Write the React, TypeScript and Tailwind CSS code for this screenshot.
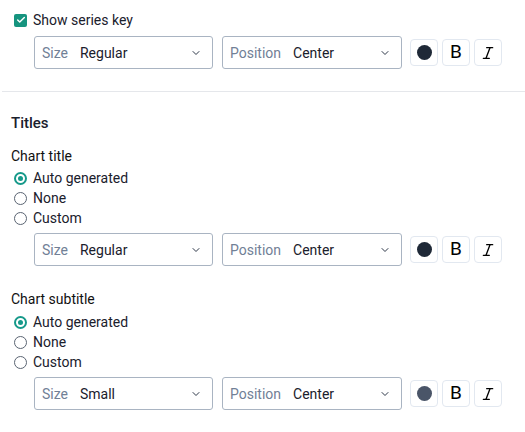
import { Italic, ChevronDown, Check } from "lucide-react";

type SelectProps = { label: string; value: string; width: string };

function Select({ label, value, width }: SelectProps) {
  return (
    <div
      className={`flex items-center h-[33px] ${width} rounded-[3px] border border-[#a9b4c2] pl-[7px] pr-[10px] pt-px text-[14px]`}
    >
      <span className="text-[#718096]">{label}</span>
      <span className="ml-[12px] text-[#1a202c]">{value}</span>
      <ChevronDown className="ml-auto text-[#2d3748]" size={12} strokeWidth={2} />
    </div>
  );
}

function StyleRow({ size, dot }: { size: string; dot: string }) {
  return (
    <div className="flex items-center ml-[34px]">
      <Select label="Size" value={size} width="w-[179px]" />
      <div className="ml-[9px]">
        <Select label="Position" value="Center" width="w-[180px]" />
      </div>
      <div className="ml-[8px] flex gap-[4px]">
        <button className="w-[28px] h-[27px] rounded-[4px] border border-[#e2e8f0] flex items-center justify-center">
          <span className={`block w-[15px] h-[15px] rounded-full ${dot}`} />
        </button>
        <button className="w-[28px] h-[27px] rounded-[4px] border border-[#e2e8f0] flex items-center justify-center text-[19px] font-normal text-black">
          B
        </button>
        <button className="w-[28px] h-[27px] rounded-[4px] border border-[#e2e8f0] flex items-center justify-center text-black">
          <Italic size={16} strokeWidth={2} />
        </button>
      </div>
    </div>
  );
}

function Radio({ label, checked }: { label: string; checked?: boolean }) {
  return (
    <div className="flex items-center h-5 pl-[14px]">
      {checked ? (
        <span className="w-[13px] h-[13px] rounded-full border-[2px] border-[#16998a] flex items-center justify-center">
          <span className="w-[5px] h-[5px] rounded-full bg-[#16998a]" />
        </span>
      ) : (
        <span className="w-[13px] h-[13px] rounded-full border border-[#5a6472]" />
      )}
      <span className="ml-[6px] text-[14px] text-[#1a202c]">{label}</span>
    </div>
  );
}

export default function App() {
  return (
    <div
      className="w-[525px] h-[432px] bg-white overflow-hidden"
      style={{ fontFamily: "Roboto, 'Liberation Sans', sans-serif" }}
    >
      <div className="pt-[10px]">
        <div className="flex items-center h-5 pl-[14px]">
          <span className="w-[13px] h-[13px] rounded-[2px] bg-[#16947f] flex items-center justify-center">
            <Check size={10} strokeWidth={3.5} className="text-white" />
          </span>
          <span className="ml-[6px] text-[14px] text-[#1a202c]">Show series key</span>
        </div>
        <div className="mt-[6px]">
          <StyleRow size="Regular" dot="bg-[#1f2937]" />
        </div>
        <div className="mt-[22px] ml-[2px] h-px bg-[#e5e7eb]" />
        <div className="mt-[21px] pl-[11px] h-5 leading-5 text-[15px] font-medium text-[#1a202c]">
          Titles
        </div>
        <div className="mt-[13px] pl-[11px] h-5 leading-5 text-[14px] text-[#111]">Chart title</div>
        <div className="mt-[2px]">
          <Radio label="Auto generated" checked />
          <Radio label="None" />
          <Radio label="Custom" />
        </div>
        <div className="mt-[5px]">
          <StyleRow size="Regular" dot="bg-[#1f2937]" />
        </div>
        <div className="mt-[23px] pl-[11px] h-5 leading-5 text-[14px] text-[#111]">Chart subtitle</div>
        <div className="mt-[3px]">
          <Radio label="Auto generated" checked />
          <Radio label="None" />
          <Radio label="Custom" />
        </div>
        <div className="mt-[5px]">
          <StyleRow size="Small" dot="bg-[#4a5568]" />
        </div>
      </div>
    </div>
  );
}
